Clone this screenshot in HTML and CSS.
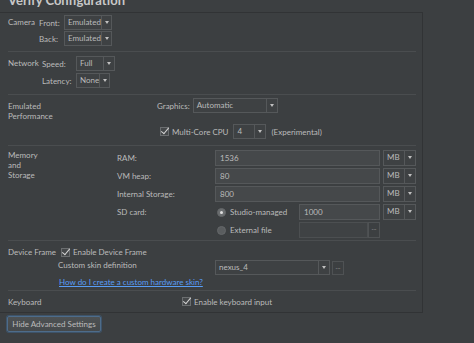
FILE: index.html
```html
<!DOCTYPE html>
<html lang="en">
<head>
    <meta charset="UTF-8">
    <title>Verify Configuration</title>
    <link rel="stylesheet" href="styles.css">
</head>
<body>
    <div class="title">Verify Configuration</div>
    <div class="panel">
        <!-- Camera -->
        <div class="group camera">
            <div class="group-label">Camera</div>
            <div class="grid">
                <span class="lbl">Front:</span>
                <div class="combo w48"><span class="val">Emulated</span><span class="arrow"></span></div>
                <span class="lbl">Back:</span>
                <div class="combo w48"><span class="val">Emulated</span><span class="arrow"></span></div>
            </div>
        </div>

        <!-- Network -->
        <div class="group network">
            <div class="group-label">Network</div>
            <div class="grid">
                <span class="lbl">Speed:</span>
                <div class="combo w39"><span class="val">Full</span><span class="arrow"></span></div>
                <span class="lbl">Latency:</span>
                <div class="combo w34"><span class="val">None</span><span class="arrow"></span></div>
            </div>
        </div>

        <!-- Emulated Performance -->
        <div class="group perf">
            <div class="group-label">Emulated<br>Performance</div>
            <div class="perf-rows">
                <div class="perf-row">
                    <span class="lbl">Graphics:</span>
                    <div class="combo w85"><span class="val">Automatic</span><span class="arrow"></span></div>
                </div>
                <div class="perf-row cpu">
                    <span class="check"></span>
                    <span class="lbl">Multi-Core CPU</span>
                    <div class="combo w33"><span class="val">4</span><span class="arrow"></span></div>
                    <span class="lbl">(Experimental)</span>
                </div>
            </div>
        </div>

        <!-- Memory and Storage -->
        <div class="group memory">
            <div class="group-label">Memory<br>and<br>Storage</div>
            <div class="mem-grid">
                <span class="lbl">RAM:</span>
                <div class="field">1536</div>
                <div class="combo unit"><span class="val">MB</span><span class="arrow"></span></div>

                <span class="lbl">VM heap:</span>
                <div class="field">80</div>
                <div class="combo unit"><span class="val">MB</span><span class="arrow"></span></div>

                <span class="lbl">Internal Storage:</span>
                <div class="field">800</div>
                <div class="combo unit"><span class="val">MB</span><span class="arrow"></span></div>

                <span class="lbl">SD card:</span>
                <div class="sd">
                    <span class="radio on"></span>
                    <span class="lbl sd-lbl">Studio-managed</span>
                    <div class="field grow">1000</div>
                </div>
                <div class="combo unit"><span class="val">MB</span><span class="arrow"></span></div>

                <span></span>
                <div class="sd">
                    <span class="radio"></span>
                    <span class="lbl sd-lbl">External file</span>
                    <div class="field grow disabled"></div>
                    <div class="dots">...</div>
                </div>
                <span></span>
            </div>
        </div>

        <!-- Device Frame -->
        <div class="group device">
            <div class="group-label">Device Frame</div>
            <div class="device-rows">
                <div class="device-check">
                    <span class="check"></span>
                    <span class="lbl">Enable Device Frame</span>
                </div>
                <div class="skin-row">
                    <span class="lbl">Custom skin definition</span>
                    <div class="skin-pick">
                        <div class="combo w115"><span class="val">nexus_4</span><span class="arrow"></span></div>
                        <div class="dots dim">...</div>
                    </div>
                </div>
                <a class="link" href="#">How do I create a custom hardware skin?</a>
            </div>
        </div>

        <!-- Keyboard -->
        <div class="group keyboard">
            <div class="group-label">Keyboard</div>
            <div class="kb-check">
                <span class="check"></span>
                <span class="lbl">Enable keyboard input</span>
            </div>
        </div>
    </div>

    <div class="actions">
        <button class="btn">Hide Advanced Settings</button>
    </div>
</body>
</html>
```

FILE: styles.css
```css
body {
    margin: 0;
    padding: 0;
    width: 474px;
    height: 343px;
    overflow: hidden;
    background: #3c3f41;
    color: #bbbbbb;
    font-family: Lato, "Open Sans", sans-serif;
    font-size: 8px;
}

.title {
    height: 21px;
    margin-top: -9px;
    padding-left: 8px;
    font-size: 13px;
    font-weight: bold;
    line-height: 18px;
    color: #c8c8c8;
    overflow: hidden;
    box-sizing: border-box;
}

.panel {
    width: 423px;
    height: 301px;
    box-sizing: border-box;
    border-top: 1px solid #313335;
    border-right: 1px solid #313335;
    border-bottom: 1px solid #313335;
}

.group {
    display: flex;
    box-sizing: border-box;
    margin: 0 6px 0 8px;
    border-bottom: 1px solid #4a4d4f;
}

.group-label {
    line-height: 10px;
    white-space: nowrap;
}

.lbl {
    white-space: nowrap;
}

/* combo box */
.combo {
    display: flex;
    height: 15px;
    box-sizing: border-box;
    border: 1px solid #55585a;
    background: #3e4143;
    line-height: 13px;
}

.combo .val {
    flex: 1;
    padding-left: 3px;
    white-space: nowrap;
}

.combo .arrow {
    width: 10px;
    flex: none;
    border-left: 1px solid #55585a;
    position: relative;
}

.combo .arrow::after {
    content: '';
    position: absolute;
    left: 3px;
    top: 5px;
    border-left: 2px solid transparent;
    border-right: 2px solid transparent;
    border-top: 3px solid #c0c0c0;
}

.w48 { width: 48px; }
.w39 { width: 39px; }
.w34 { width: 34px; }
.w85 { width: 85px; }
.w33 { width: 33px; }
.w115 { width: 115px; }

/* text field */
.field {
    height: 16px;
    box-sizing: border-box;
    border: 1px solid #55585a;
    background: #45484a;
    padding-left: 4px;
    line-height: 14px;
}

.field.disabled {
    background: #3f4244;
    border-color: #4c4f51;
}

.dots {
    width: 12px;
    height: 14px;
    box-sizing: border-box;
    border: 1px solid #4f5254;
    line-height: 9px;
    text-align: center;
    color: #8a8a8a;
    font-size: 7px;
}

.dots.dim {
    margin-left: 2px;
}

/* checkbox */
.check {
    display: inline-block;
    position: relative;
    width: 7px;
    height: 7px;
    border: 1px solid #6b6e70;
    background: #45484a;
    margin-right: 3px;
    flex: none;
}

.check::after {
    content: '';
    position: absolute;
    left: 2px;
    top: -2px;
    width: 3px;
    height: 7px;
    border-right: 1.5px solid #d6d6d6;
    border-bottom: 1.5px solid #d6d6d6;
    transform: rotate(40deg);
}

/* radio */
.radio {
    width: 7px;
    height: 7px;
    border-radius: 50%;
    background: #5a5d5f;
    border: 1px solid #646769;
    position: relative;
    flex: none;
}

.radio.on {
    background: #6a6d6f;
}

.radio.on::after {
    content: '';
    position: absolute;
    left: 2px;
    top: 2px;
    width: 3px;
    height: 3px;
    border-radius: 50%;
    background: #e0e0e0;
}

/* camera */
.camera {
    height: 39px;
    padding-top: 2px;
}

.camera .group-label {
    width: 31px;
    padding-top: 2px;
}

.grid {
    display: grid;
    align-items: center;
    row-gap: 1px;
    grid-auto-rows: 15px;
}

.camera .grid {
    grid-template-columns: 25px auto;
}

/* network */
.network {
    height: 43px;
    padding-top: 4px;
}

.network .group-label {
    width: 34px;
    padding-top: 2px;
}

.network .grid {
    grid-template-columns: 34px auto;
    row-gap: 2px;
}

/* emulated performance */
.perf {
    height: 51px;
    padding-top: 3px;
}

.perf .group-label {
    width: 149px;
    padding-top: 3px;
}

.perf-rows {
    display: flex;
    flex-direction: column;
    gap: 11px;
}

.perf-row {
    display: flex;
    align-items: center;
    height: 15px;
}

.perf-row .lbl {
    margin-right: 3px;
}

.perf-row.cpu {
    padding-left: 3px;
}

.perf-row.cpu .combo {
    margin: 0 5px 0 2px;
}

/* memory */
.memory {
    height: 95px;
    padding-top: 4px;
}

.memory .group-label {
    width: 109px;
}

.mem-grid {
    display: grid;
    grid-template-columns: 98px 165px 33px;
    grid-auto-rows: 16px;
    row-gap: 2px;
    align-items: center;
}

.mem-grid .combo.unit {
    margin-left: 3px;
    width: 33px;
    height: 16px;
}

.sd {
    display: flex;
    align-items: center;
    height: 16px;
}

.sd .radio {
    margin-left: 2px;
}

.sd-lbl {
    width: 69px;
    padding-left: 4px;
}

.field.grow {
    flex: 1;
}

.sd .dots {
    height: 16px;
}

/* device frame */
.device {
    height: 50px;
    padding-top: 5px;
}

.device .group-label {
    width: 50px;
    padding-top: 1px;
}

.device-rows {
    display: flex;
    flex-direction: column;
}

.device-check {
    display: flex;
    align-items: center;
    height: 12px;
    padding-left: 3px;
}

.skin-row {
    display: flex;
    align-items: center;
    height: 15px;
    margin-top: 2px;
}

.skin-row .lbl {
    width: 157px;
    margin-top: -6px;
}

.skin-pick {
    display: flex;
    align-items: center;
}

.link {
    margin-top: 2px;
    padding-left: 1px;
    color: #589df6;
    line-height: 10px;
}

/* keyboard */
.keyboard {
    height: 21px;
    align-items: center;
    border-bottom: none;
}

.keyboard .group-label {
    width: 174px;
}

.kb-check {
    display: flex;
    align-items: center;
}

/* bottom button */
.actions {
    padding: 3px 0 0 7px;
}

.btn {
    width: 94px;
    height: 16px;
    padding: 0;
    border: 1px solid #4e6c8a;
    border-radius: 2px;
    background: linear-gradient(180deg, #4d5153 0%, #45494b 100%);
    color: #bbbbbb;
    font-family: Lato, "Open Sans", sans-serif;
    font-size: 8px;
    box-shadow: 0 0 0 1px #3d5369;
}
```
